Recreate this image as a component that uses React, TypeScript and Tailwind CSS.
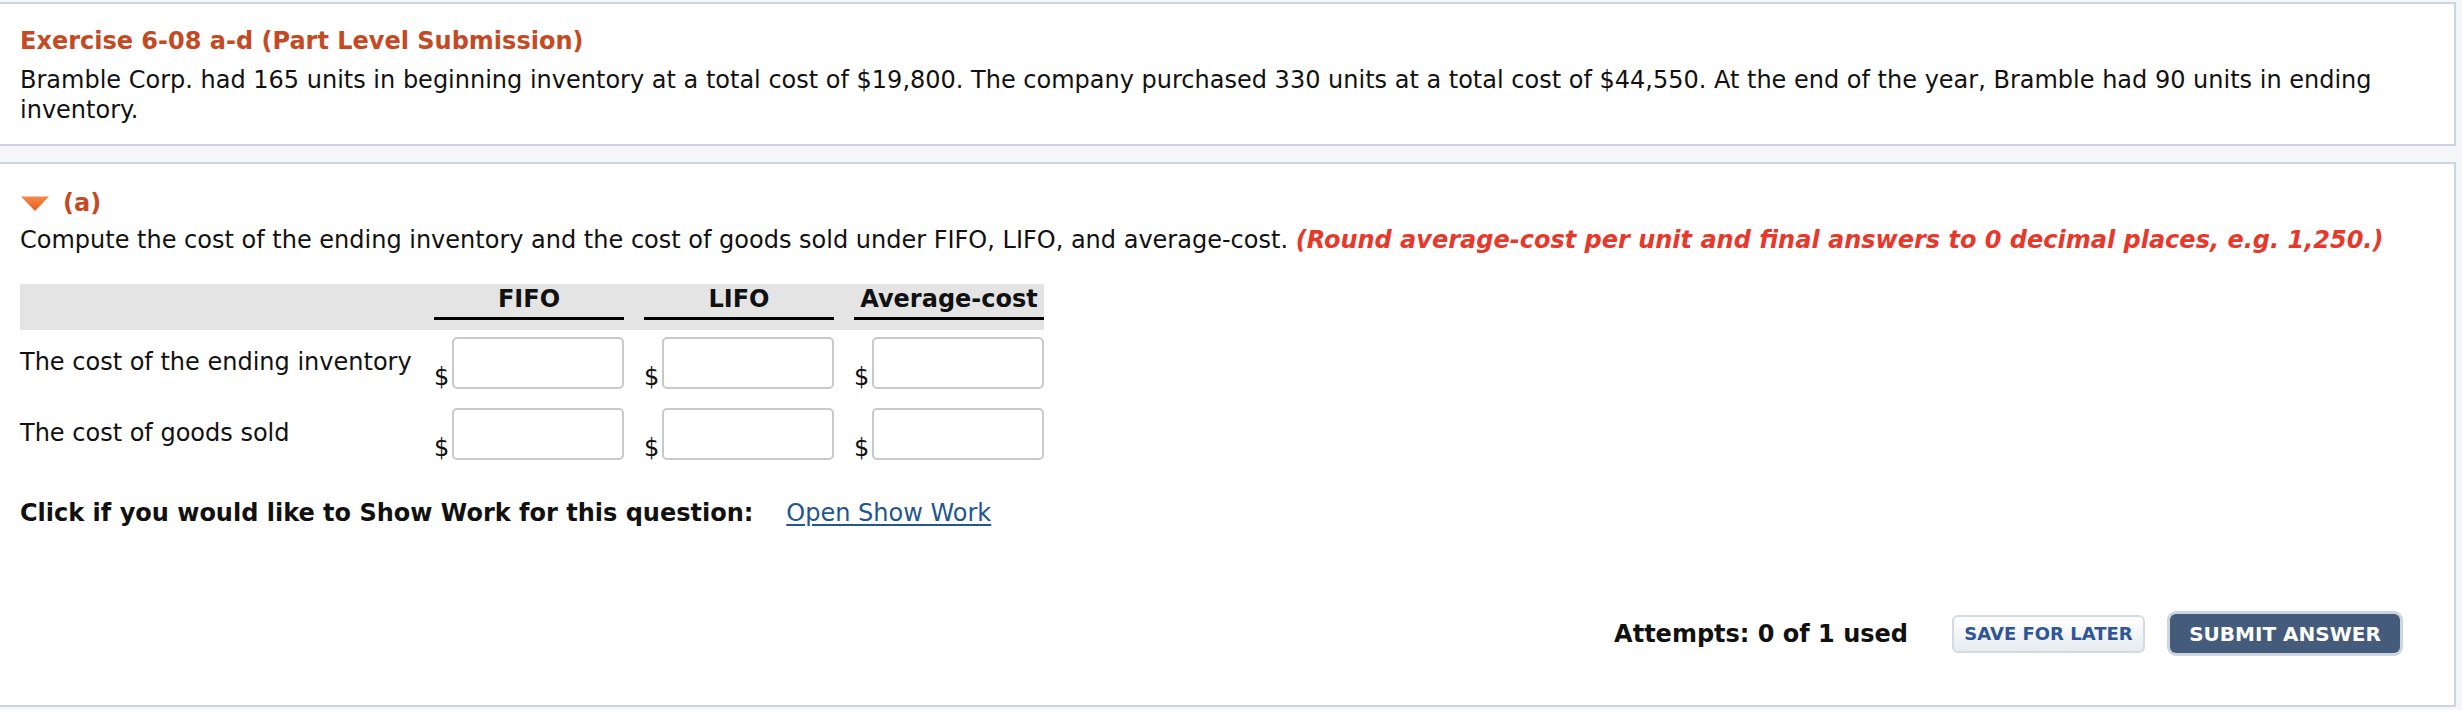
import React from "react";

const columns = ["FIFO", "LIFO", "Average-cost"];

const rows = ["The cost of the ending inventory", "The cost of goods sold"];

function CaretDown() {
  return (
    <svg width="30" height="17" viewBox="0 0 30 17" aria-hidden="true">
      <defs>
        <linearGradient id="caret" x1="0" y1="0" x2="0" y2="1">
          <stop offset="0" stopColor="#f58a4a" />
          <stop offset="1" stopColor="#e85b1e" />
        </linearGradient>
      </defs>
      <path d="M1 1.5 L29 1.5 L15 16 Z" fill="url(#caret)" />
    </svg>
  );
}

function MoneyInput() {
  return (
    <div className="flex items-end">
      <span className="w-[18px] shrink-0 leading-[24px]">$</span>
      <input
        type="text"
        aria-label="amount"
        className="h-[52px] w-[172px] rounded-[5px] border-2 border-[#c9c9c9] bg-white px-2 outline-none"
      />
    </div>
  );
}

export default function App() {
  return (
    <div className="min-h-[710px] bg-[#f5f6f8] pr-[6px] pt-[2px] font-['DejaVu_Sans',Verdana,sans-serif] text-[24px] leading-[30px] text-[#111]">
      <section className="border-y-2 border-r-2 border-[#cdd4dd] bg-white pb-[19px] pl-[20px] pr-[20px] pt-[22px]">
        <h1 className="font-bold text-[#c54a24]">Exercise 6-08 a-d (Part Level Submission)</h1>
        <p className="mt-[9px]">
          Bramble Corp. had 165 units in beginning inventory at a total cost of $19,800. The company purchased 330
          units at a total cost of $44,550. At the end of the year, Bramble had 90 units in ending inventory.
        </p>
      </section>

      <section className="mt-[16px] border-y-2 border-r-2 border-[#cdd4dd] bg-white pb-[52px] pl-[20px] pr-[51px] pt-[24px]">
        <div className="flex items-center gap-[13px]">
          <CaretDown />
          <span className="font-bold text-[#c54a24]">(a)</span>
        </div>
        <p className="mt-[7px]">
          Compute the cost of the ending inventory and the cost of goods sold under FIFO, LIFO, and average-cost.{" "}
          <em className="font-bold text-[#e8382b]">
            (Round average-cost per unit and final answers to 0 decimal places, e.g. 1,250.)
          </em>
        </p>

        <div className="mt-[29px] w-[1024px]">
          <div className="grid grid-cols-[394px_190px_190px_190px] gap-x-[20px] bg-[#e4e4e4] pb-[10px]">
            <div />
            {columns.map((col) => (
              <div key={col} className="border-b-[3px] border-black pb-[3px] text-center font-bold">
                {col}
              </div>
            ))}
          </div>

          {rows.map((row, i) => (
            <div
              key={row}
              className={`grid grid-cols-[394px_190px_190px_190px] gap-x-[20px] ${i === 0 ? "mt-[7px]" : "mt-[19px]"}`}
            >
              <div className="whitespace-nowrap pt-[10px]">{row}</div>
              {columns.map((col) => (
                <MoneyInput key={col} />
              ))}
            </div>
          ))}
        </div>

        <p className="mt-[38px]">
          <span className="font-bold">Click if you would like to Show Work for this question:</span>
          <a href="#" className="ml-[33px] text-[#23558f] underline underline-offset-[3px]">
            Open Show Work
          </a>
        </p>

        <div className="mt-[86px] flex items-center justify-end">
          <span className="font-bold">Attempts: 0 of 1 used</span>
          <button
            type="button"
            className="ml-[44px] h-[38px] w-[193px] rounded-[6px] border-2 border-[#d3dae3] bg-gradient-to-b from-white to-[#e7ebf0] text-[18px] font-bold text-[#2f5597]"
          >
            SAVE FOR LATER
          </button>
          <button
            type="button"
            className="ml-[25px] mr-[3px] h-[39px] w-[230px] rounded-[6px] bg-[#445b7b] text-[20px] font-bold text-white shadow-[0_0_0_3px_#cdd5df]"
          >
            SUBMIT ANSWER
          </button>
        </div>
      </section>
    </div>
  );
}
